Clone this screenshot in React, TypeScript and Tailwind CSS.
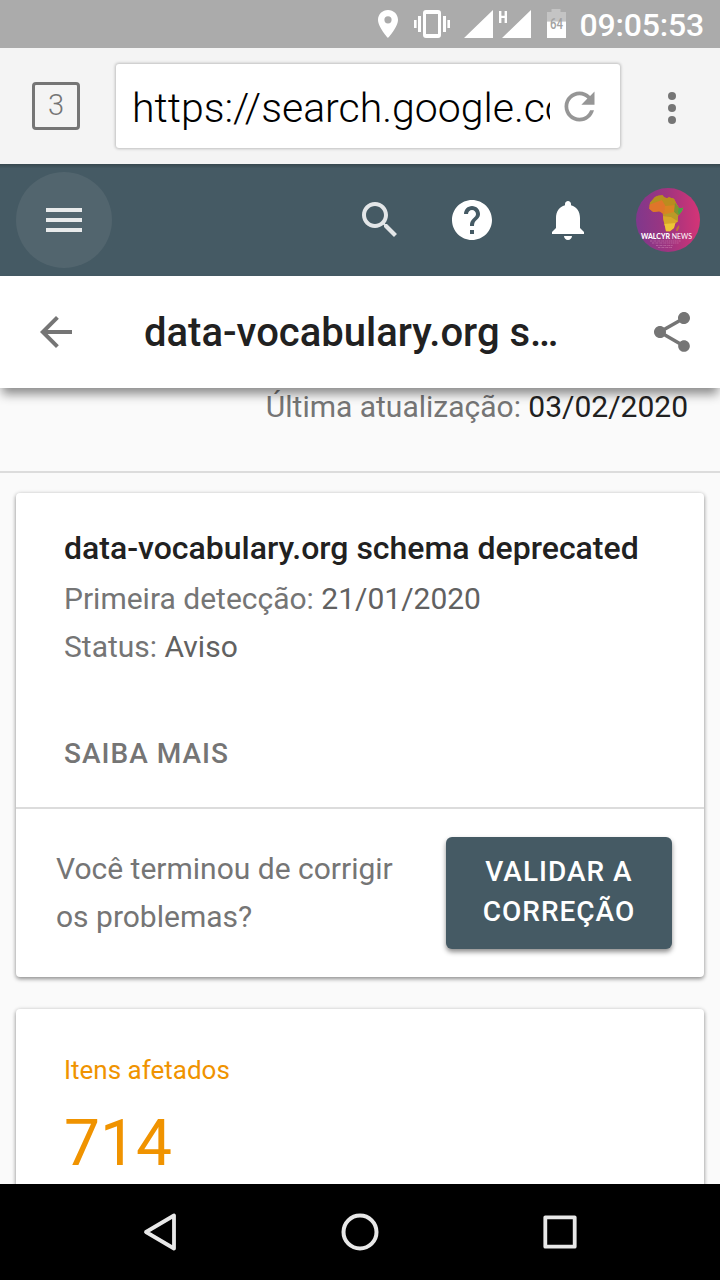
import type { ReactNode } from "react";

function Glyph({ d, className }: { d: string; className: string }) {
  return (
    <svg viewBox="0 0 24 24" className={className} fill="currentColor" aria-hidden="true">
      <path d={d} />
    </svg>
  );
}

const MENU = "M3 18h18v-2H3v2zm0-5h18v-2H3v2zm0-7v2h18V6H3z";
const SEARCH =
  "M15.5 14h-.79l-.28-.27C15.41 12.59 16 11.11 16 9.5 16 5.91 13.09 3 9.5 3S3 5.91 3 9.5 5.91 16 9.5 16c1.61 0 3.09-.59 4.23-1.57l.27.28v.79l5 4.99L20.49 19l-4.99-5zm-6 0C7.01 14 5 11.99 5 9.5S7.01 5 9.5 5 14 7.01 14 9.5 11.99 14 9.5 14z";
const HELP =
  "M12 2C6.48 2 2 6.48 2 12s4.48 10 10 10 10-4.48 10-10S17.52 2 12 2zm1 17h-2v-2h2v2zm2.07-7.75l-.9.92C13.45 12.9 13 13.5 13 15h-2v-.5c0-1.1.45-2.1 1.17-2.83l1.24-1.26c.37-.36.59-.86.59-1.41 0-1.1-.9-2-2-2s-2 .9-2 2H8c0-2.21 1.79-4 4-4s4 1.79 4 4c0 .88-.36 1.68-.93 2.25z";
const BELL =
  "M12 22c1.1 0 2-.9 2-2h-4c0 1.1.89 2 2 2zm6-6v-5c0-3.07-1.64-5.64-4.5-6.32V4c0-.83-.67-1.5-1.5-1.5s-1.5.67-1.5 1.5v.68C7.63 5.36 6 7.92 6 11v5l-2 2v1h16v-1l-2-2z";
const BACK = "M20 11H7.83l5.59-5.59L12 4l-8 8 8 8 1.41-1.41L7.83 13H20v-2z";
const SHARE =
  "M18 16.08c-.76 0-1.44.3-1.96.77L8.91 12.7c.05-.23.09-.46.09-.7s-.04-.47-.09-.7l7.05-4.11c.54.5 1.25.81 2.04.81 1.66 0 3-1.34 3-3s-1.34-3-3-3-3 1.34-3 3c0 .24.04.47.09.7L8.04 9.81C7.5 9.31 6.79 9 6 9c-1.66 0-3 1.34-3 3s1.34 3 3 3c.79 0 1.5-.31 2.04-.81l7.12 4.16c-.05.21-.08.43-.08.65 0 1.61 1.31 2.92 2.92 2.92s2.92-1.31 2.92-2.92-1.31-2.92-2.92-2.92z";
const REFRESH =
  "M17.65 6.35C16.2 4.9 14.21 4 12 4c-4.42 0-7.99 3.58-7.99 8s3.57 8 7.99 8c3.73 0 6.84-2.55 7.73-6h-2.08c-.82 2.33-3.04 4-5.65 4-3.31 0-6-2.69-6-6s2.69-6 6-6c1.66 0 3.14.69 4.22 1.78L13 11h7V4l-2.35 2.35z";

function StatusBar() {
  return (
    <div className="flex h-12 shrink-0 items-center justify-between bg-[#ababab] pr-4 pl-[364px] text-white">
      <svg width="204" height="48" viewBox="364 0 204 48" fill="currentColor" className="shrink-0" aria-hidden="true">
        <path
          fillRule="evenodd"
          d="M388 10c-5.6 0-10 4.4-10 9.8C378 27.200 388 38 388 38s10-10.800 10-18.200C398 14.400 393.600 10 388 10zm0 13.400a3.600 3.600 0 1 1 0-7.200 3.600 3.600 0 0 1 0 7.200z"
        />
        <path
          fillRule="evenodd"
          d="M426 10h12a3 3 0 0 1 3 3v22a3 3 0 0 1-3 3h-12a3 3 0 0 1-3-3V13a3 3 0 0 1 3-3zm0 4v20h12V14z"
        />
        <path d="M418 16h3v16h-3zM414 20h2.600v8H414zM443 16h3v16h-3zM447.400 20h2.600v8h-2.600z" />
        <path d="M464 38L493 10V38zM502 38L531 10V38z" />
        <path d="M499 11h2.400v4.800h3.200V11h2.400v12h-2.400v-5h-3.200v5H499z" />
        <path d="M547 12h4.500V9h9v3h5.500v9.500h-19z" fillOpacity="0.300" />
        <path d="M547 21.500h19V38h-19z" />
        <text
          x="556.500"
          y="29"
          textAnchor="middle"
          fill="#a2a2a2"
          textLength="13"
          lengthAdjust="spacingAndGlyphs"
          className="font-['Roboto',sans-serif] text-[14px] font-medium"
        >
          64
        </text>
      </svg>
      <span className="pt-[2px] text-[32px] leading-[46px] font-medium tracking-[-0.200px] whitespace-nowrap">
        09:05:53
      </span>
    </div>
  );
}

function BrowserBar() {
  return (
    <div className="flex h-[116px] shrink-0 items-center bg-[#f4f4f4] pl-8">
      <div className="flex size-12 items-center justify-center rounded-[4px] border-[3px] border-[#757575] pb-px text-[29px] font-light text-[#757575]">
        3
      </div>
      <div className="ml-9 flex h-[84px] w-[504px] items-center rounded-[3px] bg-white pl-4 shadow-[0_0_3px_1px_rgba(0,0,0,0.22)]">
        <div className="w-[418px] overflow-hidden pt-1 text-[41px] leading-[60px] font-light whitespace-nowrap text-black">
          https://search.google.com
        </div>
        <Glyph d={REFRESH} className="ml-[7px] size-[45px] shrink-0 text-[#969696]" />
      </div>
      <div className="ml-12 flex flex-col gap-1 pt-1">
        <span className="size-2 rounded-full bg-[#757575]" />
        <span className="size-2 rounded-full bg-[#757575]" />
        <span className="size-2 rounded-full bg-[#757575]" />
      </div>
    </div>
  );
}

function Avatar() {
  return (
    <svg width="64" height="64" viewBox="0 0 64 64" aria-hidden="true">
      <defs>
        <linearGradient id="disc" x1="0" y1="0.400" x2="1" y2="0.350">
          <stop offset="0" stopColor="#80388c" />
          <stop offset="0.500" stopColor="#a0347f" />
          <stop offset="1" stopColor="#d53476" />
        </linearGradient>
        <clipPath id="africa">
          <path d="M19 9L22 7.800 26.700 7.300 28 9.300 31 10.200 33 9.300 38 10.700 40.700 16.300 43.300 20.300 47.300 19.700 46 23.300 42 28V33.300L39.300 35.300 38 40 34 43.300H30L28.700 37.300 27.300 31.300 26.700 25.300 23.300 23.300 17.300 24 13.300 20.700 14 14.700z" />
        </clipPath>
      </defs>
      <circle cx="32" cy="32" r="32" fill="url(#disc)" />
      <g clipPath="url(#africa)">
        <path d="M10 5h40v41H10z" fill="#c98a22" />
        <path d="M13 5h17l-2 7-8 4-7 2z" fill="#b5901f" />
        <path d="M12 17l14-5 4 6-3 8H12z" fill="#e0752a" />
        <path d="M26 12l3-4 12 3 1 7-12 1z" fill="#ba8c1f" />
        <path d="M29 18l12-1-3 8-10 2z" fill="#d98322" />
        <path d="M39 15l5 5-1 8-5-4z" fill="#7d9331" />
        <path d="M43 19h5l-4 9-2-4z" fill="#48a24a" />
        <path d="M26 27l12-3 5 5v5l-8-5z" fill="#b99a28" />
        <path d="M26 28l9 1 8 5-3 3-12 1z" fill="#d7a629" />
        <path d="M28 36l12-1-2 9h-9z" fill="#edc437" />
      </g>
      <path d="M40.500 40l2.500-3 .3 2-1.600 4h-1.700z" fill="#bd7138" />
      <text
        x="5"
        y="50.800"
        fill="white"
        textLength="51"
        lengthAdjust="spacingAndGlyphs"
        className="font-['Lato',sans-serif] text-[7.500px]"
      >
        <tspan className="font-black">WALCYR</tspan> NEWS
      </text>
      <g stroke="#dc9cc3" strokeWidth="0.600" strokeDasharray="2 0.600 1 0.500" opacity="0.700">
        <path d="M14 53h31M16 55h27M20 57.500h17M22 59.500h14" />
      </g>
    </svg>
  );
}

function AppHeader() {
  return (
    <div className="flex h-28 shrink-0 items-center bg-[#455a64] bg-linear-to-b from-[#37484f] from-0% to-[#455a64] to-4% pl-4 text-white">
      <div className="flex size-24 items-center justify-center rounded-full bg-[#52656e]">
        <Glyph d={MENU} className="size-12 text-[#e8eaeb]" />
      </div>
      <div className="ml-auto flex items-center pr-5">
        <Glyph d={SEARCH} className="mr-11 size-12 text-[#e3e6e8]" />
        <Glyph d={HELP} className="mr-12 size-12" />
        <Glyph d={BELL} className="mr-11 size-12" />
        <Avatar />
      </div>
    </div>
  );
}

function TitleBar() {
  return (
    <div className="z-10 flex h-28 shrink-0 items-center bg-white pr-6 pl-8 shadow-[0_8px_10px_-2px_rgba(0,0,0,0.45)]">
      <Glyph d={BACK} className="size-12 text-[#757575]" />
      <h1 className="ml-16 pt-[2px] text-[40px] leading-[56px] font-medium text-[#212121]">data-vocabulary.org s…</h1>
      <Glyph d={SHARE} className="ml-auto size-12 text-[#757575]" />
    </div>
  );
}

function Card({ children }: { children: ReactNode }) {
  return (
    <section className="mx-4 rounded-[4px] bg-white shadow-[0_2px_4px_rgba(0,0,0,0.4),0_0_4px_rgba(0,0,0,0.1)]">
      {children}
    </section>
  );
}

function Content() {
  return (
    <main className="flex min-h-0 flex-1 flex-col overflow-hidden bg-[#fafafa]">
      <div className="h-[85px] shrink-0 border-b-2 border-[#dcdcdc] pr-8 text-right text-[30px] leading-[38px] text-[#757575]">
        Última atualização: <span className="text-[#212121]">03/02/2020</span>
      </div>
      <div className="flex flex-col gap-8 pt-5">
        <Card>
          <div className="h-[316px] border-b-2 border-[#dcdcdc] px-12 pt-[31px]">
            <h2 className="text-[32px] leading-[48px] font-medium text-[#212121]">
              data-vocabulary.org schema deprecated
            </h2>
            <p className="mt-[3px] text-[30px] leading-[48px] text-[#757575]">
              Primeira detecção: <span className="text-[#616161]">21/01/2020</span>
            </p>
            <p className="text-[30px] leading-[48px] text-[#757575]">
              Status: <span className="text-[#616161]">Aviso</span>
            </p>
            <button className="mt-[63px] block text-[28px] leading-[40px] font-medium tracking-[1px] text-[#757575]">
              SAIBA MAIS
            </button>
          </div>
          <div className="flex h-[168px] items-center justify-between pr-8 pl-10">
            <p className="text-[30px] leading-[48px] text-[#757575]">
              Você terminou de corrigir
              <br />
              os problemas?
            </p>
            <button className="h-28 w-[226px] rounded-[6px] bg-[#455a64] pb-[2px] text-[28px] leading-[40px] font-medium tracking-[1px] text-white shadow-[0_3px_5px_rgba(0,0,0,0.45)]">
              VALIDAR A<br />
              CORREÇÃO
            </button>
          </div>
        </Card>
        <Card>
          <div className="h-60 px-12 pt-[41px] text-[#f09300]">
            <p className="text-[26px] leading-[40px]">Itens afetados</p>
            <p className="mt-[14px] text-[64px] leading-[80px]">714</p>
          </div>
        </Card>
      </div>
    </main>
  );
}

function NavigationBar() {
  return (
    <nav className="flex h-24 shrink-0 items-center justify-between bg-black px-[140px] text-[#e8e8e8]">
      <svg width="40" height="40" viewBox="0 0 40 40" fill="none" stroke="currentColor" strokeWidth="3.800" strokeLinejoin="round">
        <path d="M34 3.500V36.500L6 20z" />
      </svg>
      <svg width="40" height="40" viewBox="0 0 40 40" fill="none" stroke="currentColor" strokeWidth="4">
        <circle cx="20" cy="20" r="16.500" />
      </svg>
      <svg width="40" height="40" viewBox="0 0 40 40" fill="none" stroke="currentColor" strokeWidth="3.800" strokeLinejoin="round">
        <path d="M5.300 5.300h29.400v29.400H5.300z" />
      </svg>
    </nav>
  );
}

export default function App() {
  return (
    <div className="flex h-[1280px] w-[720px] flex-col overflow-hidden bg-[#fafafa] font-['Roboto',sans-serif]">
      <StatusBar />
      <BrowserBar />
      <AppHeader />
      <TitleBar />
      <Content />
      <NavigationBar />
    </div>
  );
}
